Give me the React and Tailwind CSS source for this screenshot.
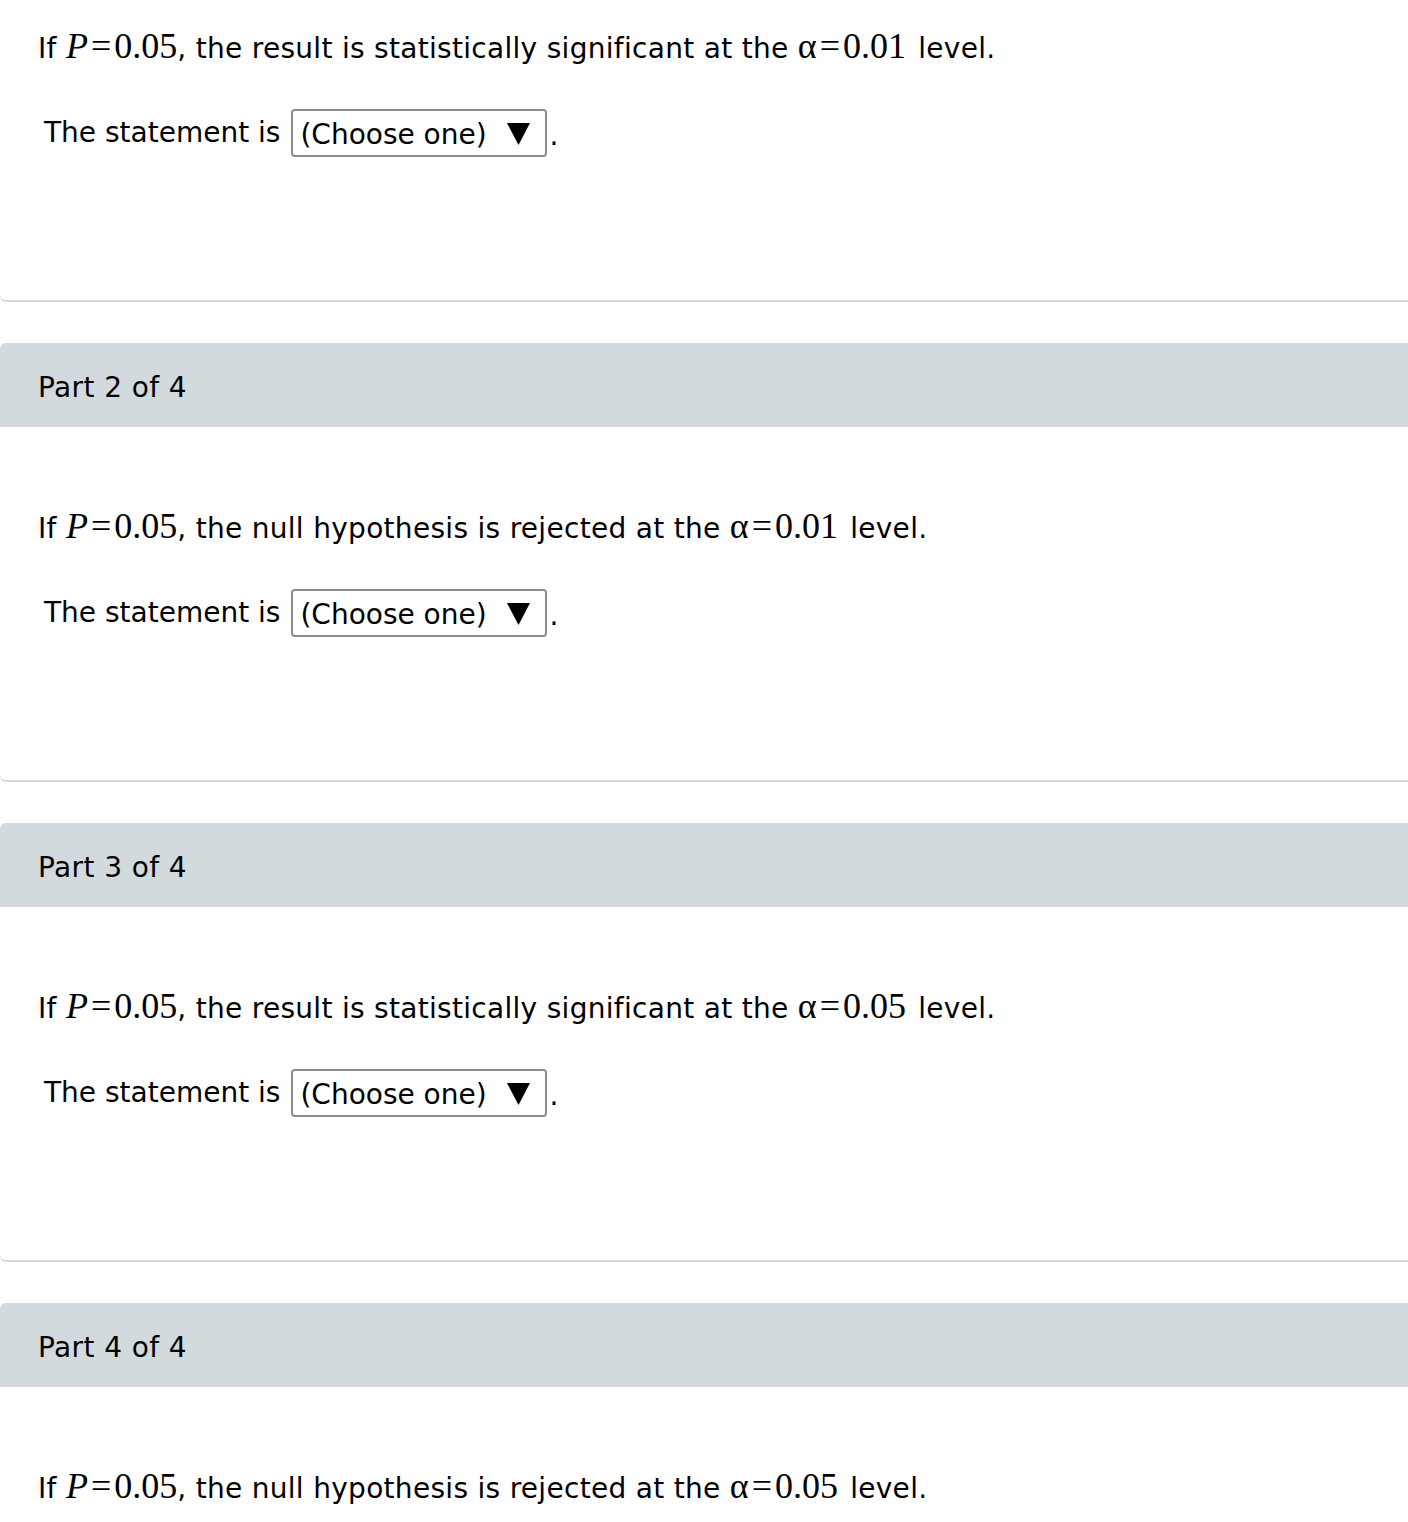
import React from "react";

const SANS = { fontFamily: '"DejaVu Sans", Verdana, sans-serif' };

function MathExpr({ sym, val, italic }) {
  return (
    <span
      className="text-[36px] leading-none tracking-normal"
      style={{ fontFamily: '"Liberation Serif", "Times New Roman", serif' }}
    >
      {italic ? <i>{sym}</i> : <span>{sym}</span>}
      <span className="mx-[3px]">=</span>
      <span>{val}</span>
    </span>
  );
}

function Question({ text1, alpha }) {
  return (
    <p className="h-[40px] overflow-visible text-[28px] leading-[40px] tracking-[0.3px] text-black whitespace-nowrap">
      If <MathExpr sym="P" val="0.05" italic />, {text1} the{" "}
      <MathExpr sym="α" val={alpha} /> <span className="ml-[3px]">level.</span>
    </p>
  );
}

function SelectRow() {
  return (
    <div className="flex items-center pl-[6px] text-[28px] text-black">
      <span className="leading-[40px]">The statement is</span>
      <div className="ml-[11px] flex h-[48px] w-[256px] items-center rounded-[4px] border-2 border-[#8d8d8d] pl-[7px] pt-[3px]">
        <span className="leading-[40px]">(Choose one)</span>
        <svg className="ml-[20px] mt-[-2px]" width="23" height="22" viewBox="0 0 23 22">
          <polygon points="0,0 23,0 11.5,22" fill="#000" />
        </svg>
      </div>
      <span className="ml-[2px] mt-[6px] leading-[40px]">.</span>
    </div>
  );
}

function Header({ n }) {
  return (
    <div className="flex h-[84px] items-center rounded-tl-[6px] bg-[#d3dadd] pl-[38px] pt-[5px] text-[28px] tracking-[0.4px] text-black">
      Part {n} of 4
    </div>
  );
}

function Body({ text1, alpha, top, withSelect = true }) {
  return (
    <div className={`${top} pl-[38px]`}>
      <Question text1={text1} alpha={alpha} />
      {withSelect && (
        <div className="mt-[41px]">
          <SelectRow />
        </div>
      )}
    </div>
  );
}

export default function App() {
  return (
    <div className="min-h-[1522px] w-full overflow-hidden bg-white" style={SANS}>
      {/* Card 1 (header scrolled off) */}
      <div className="rounded-bl-[6px] border-b-2 border-[#d3dadd] pb-[143px]">
        <Body
          top="pt-[28px]"
          text1="the result is statistically significant at"
          alpha="0.01"
        />
      </div>

      <div className="mt-[41px] rounded-l-[6px] border-b-2 border-[#d3dadd] pb-[143px]">
        <Header n={2} />
        <Body
          top="pt-[81px]"
          text1="the null hypothesis is rejected at"
          alpha="0.01"
        />
      </div>

      <div className="mt-[41px] rounded-l-[6px] border-b-2 border-[#d3dadd] pb-[143px]">
        <Header n={3} />
        <Body
          top="pt-[81px]"
          text1="the result is statistically significant at"
          alpha="0.05"
        />
      </div>

      <div className="mt-[41px] rounded-l-[6px]">
        <Header n={4} />
        <Body
          top="pt-[81px]"
          text1="the null hypothesis is rejected at"
          alpha="0.05"
          withSelect={false}
        />
      </div>
    </div>
  );
}
